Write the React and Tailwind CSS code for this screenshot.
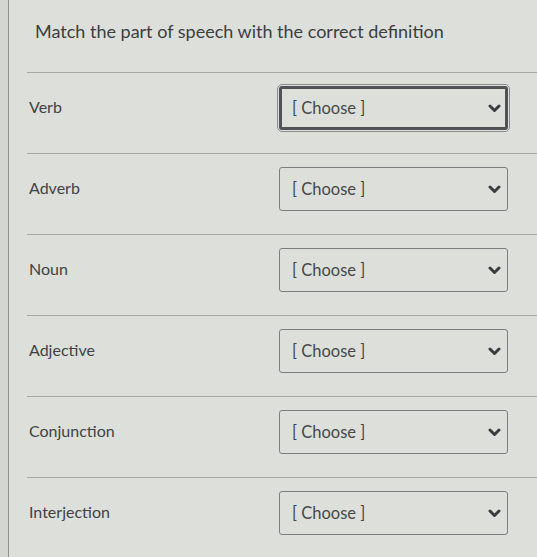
import React from "react";

const items = [
  "Verb",
  "Adverb",
  "Noun",
  "Adjective",
  "Conjunction",
  "Interjection",
];

function Chevron() {
  return (
    <svg width="13" height="9" viewBox="0 0 13 9" className="shrink-0">
      <polyline
        points="2,2 6.5,6.5 11,2"
        fill="none"
        stroke="#3a3d3f"
        strokeWidth="3"
        strokeLinecap="round"
        strokeLinejoin="round"
      />
    </svg>
  );
}

function ChooseBox({ focused }) {
  return (
    <div
      className={
        focused
          ? "w-[229px] h-[44px] flex items-center justify-between pl-[10px] pr-[4px] rounded-[3px] border-[3px] border-[#505355] outline outline-1 outline-offset-1 outline-[#8a8d8b]"
          : "w-[229px] h-[44px] flex items-center justify-between pl-[12px] pr-[6px] rounded-[3px] border border-[#7c7f80]"
      }
    >
      <span className="text-[16.5px] text-[#45484b]">[ Choose ]</span>
      <Chevron />
    </div>
  );
}

export default function App() {
  return (
    <div
      className="w-[537px] h-[557px] flex flex-col bg-[#dde0da] overflow-hidden"
      style={{ fontFamily: "Lato, 'Open Sans', sans-serif" }}
    >
      <div className="flex flex-1">
        {/* left gutter */}
        <div className="w-[9px] bg-[#d4d7d1] border-r border-[#8e918d]" />

        <div className="flex-1 flex flex-col">
          <h1 className="pl-[26px] pt-[20px] h-[72px] text-[18px] leading-[22px] text-[#3b3e41]">
            Match the part of speech with the correct definition
          </h1>

          {items.map((label, i) => (
            <div key={label} className="flex flex-col">
              <div className="ml-[18px] border-t border-[#a5a8a4]" />
              <div className="h-[80px] flex items-start pt-[13px]">
                <div className="w-[270px] pl-[20px] h-[42px] flex items-center text-[16px] text-[#3f4245]">
                  {label}
                </div>
                <ChooseBox focused={i === 0} />
              </div>
            </div>
          ))}
        </div>
      </div>

      {/* bottom strip */}
      <div className="h-[4px] bg-[#8da3bd]" />
    </div>
  );
}
